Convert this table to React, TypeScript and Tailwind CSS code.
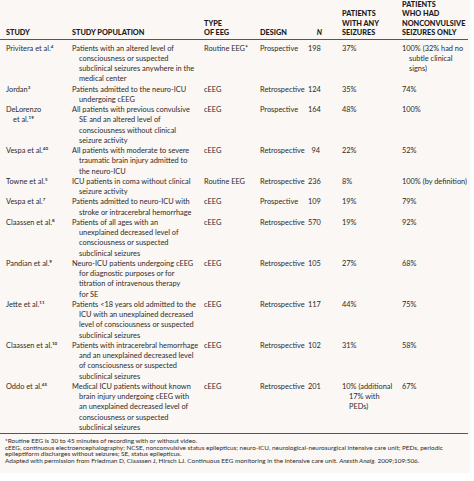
import React from "react";

type Row = {
  study: string[];
  sup: string;
  pop: string[];
  type: string;
  design: string;
  n: number;
  any: string[];
  ncs: string[];
};

const ROWS: Row[] = [
  {
    study: ["Privitera et al."],
    sup: "4",
    pop: [
      "Patients with an altered level of",
      "consciousness or suspected",
      "subclinical seizures anywhere in the",
      "medical center",
    ],
    type: "Routine EEG*",
    design: "Prospective",
    n: 198,
    any: ["37%"],
    ncs: ["100% (32% had no", "subtle clinical", "signs)"],
  },
  {
    study: ["Jordan"],
    sup: "3",
    pop: ["Patients admitted to the neuro-ICU", "undergoing cEEG"],
    type: "cEEG",
    design: "Retrospective",
    n: 124,
    any: ["35%"],
    ncs: ["74%"],
  },
  {
    study: ["DeLorenzo", "et al."],
    sup: "19",
    pop: [
      "All patients with previous convulsive",
      "SE and an altered level of",
      "consciousness without clinical",
      "seizure activity",
    ],
    type: "cEEG",
    design: "Prospective",
    n: 164,
    any: ["48%"],
    ncs: ["100%"],
  },
  {
    study: ["Vespa et al."],
    sup: "40",
    pop: [
      "All patients with moderate to severe",
      "traumatic brain injury admitted to",
      "the neuro-ICU",
    ],
    type: "cEEG",
    design: "Retrospective",
    n: 94,
    any: ["22%"],
    ncs: ["52%"],
  },
  {
    study: ["Towne et al."],
    sup: "5",
    pop: ["ICU patients in coma without clinical", "seizure activity"],
    type: "Routine EEG",
    design: "Retrospective",
    n: 236,
    any: ["8%"],
    ncs: ["100% (by definition)"],
  },
  {
    study: ["Vespa et al."],
    sup: "7",
    pop: ["Patients admitted to neuro-ICU with", "stroke or intracerebral hemorrhage"],
    type: "cEEG",
    design: "Prospective",
    n: 109,
    any: ["19%"],
    ncs: ["79%"],
  },
  {
    study: ["Claassen et al."],
    sup: "8",
    pop: [
      "Patients of all ages with an",
      "unexplained decreased level of",
      "consciousness or suspected",
      "subclinical seizures",
    ],
    type: "cEEG",
    design: "Retrospective",
    n: 570,
    any: ["19%"],
    ncs: ["92%"],
  },
  {
    study: ["Pandian et al."],
    sup: "9",
    pop: [
      "Neuro-ICU patients undergoing cEEG",
      "for diagnostic purposes or for",
      "titration of intravenous therapy",
      "for SE",
    ],
    type: "cEEG",
    design: "Retrospective",
    n: 105,
    any: ["27%"],
    ncs: ["68%"],
  },
  {
    study: ["Jette et al."],
    sup: "11",
    pop: [
      "Patients <18 years old admitted to the",
      "ICU with an unexplained decreased",
      "level of consciousness or suspected",
      "subclinical seizures",
    ],
    type: "cEEG",
    design: "Retrospective",
    n: 117,
    any: ["44%"],
    ncs: ["75%"],
  },
  {
    study: ["Claassen et al."],
    sup: "10",
    pop: [
      "Patients with intracerebral hemorrhage",
      "and an unexplained decreased level",
      "of consciousness or suspected",
      "subclinical seizures",
    ],
    type: "cEEG",
    design: "Retrospective",
    n: 102,
    any: ["31%"],
    ncs: ["58%"],
  },
  {
    study: ["Oddo et al."],
    sup: "45",
    pop: [
      "Medical ICU patients without known",
      "brain injury undergoing cEEG with",
      "an unexplained decreased level of",
      "consciousness or suspected",
      "subclinical seizures",
    ],
    type: "cEEG",
    design: "Retrospective",
    n: 201,
    any: ["10% (additional", "17% with", "PEDs)"],
    ncs: ["67%"],
  },
];

// hanging indent: first line flush, rest pushed in
function Lines({ lines, last }: { lines: string[]; last?: React.ReactNode }) {
  return (
    <>
      {lines.map((l, i) => (
        <div key={i} className={i === 0 ? "" : "pl-[7px]"}>
          {l}
          {i === lines.length - 1 && last}
        </div>
      ))}
    </>
  );
}

export default function App() {
  return (
    <div className="min-h-[481px] w-[474px] bg-white">
      <div
        className="h-[473px] w-[470px] bg-[#faf7f4] text-[#2c2c2c]"
        style={{ fontFamily: "Lato, 'Open Sans', sans-serif" }}
      >
        <table className="w-[468px] table-fixed border-collapse whitespace-nowrap text-[7.4px] leading-[10.25px]">
          <colgroup>
            <col className="w-[72px]" />
            <col className="w-[132px]" />
            <col className="w-[56px]" />
            <col className="w-[48px]" />
            <col className="w-[34px]" />
            <col className="w-[60px]" />
            <col className="w-[66px]" />
          </colgroup>
          <thead>
            <tr className="border-b border-[#555] align-bottom text-[7.3px] leading-[9.4px] uppercase text-[#1c1c1c]">
              <th className="pb-[1.5px] pl-[6px] text-left font-black">Study</th>
              <th className="pb-[1.5px] text-left font-black">Study Population</th>
              <th className="pb-[1.5px] text-left font-black">
                Type
                <br />
                of EEG
              </th>
              <th className="pb-[1.5px] text-left font-black">Design</th>
              <th className="pb-[1.5px] pr-[20px] text-right font-black normal-case italic">N</th>
              <th className="pb-[1.5px] text-left font-black">
                Patients
                <br />
                with any
                <br />
                seizures
              </th>
              <th className="pb-[1.5px] text-left font-black">
                Patients
                <br />
                who had
                <br />
                nonconvulsive
                <br />
                seizures only
              </th>
            </tr>
          </thead>
          <tbody className="align-top">
            {ROWS.map((r, idx) => {
              const first = idx === 0 ? "pt-[3.5px]" : "";
              const lastRow = idx === ROWS.length - 1;
              return (
                <tr key={idx} className={lastRow ? "border-b border-[#555]" : ""}>
                  <td className={`pl-[6px] ${first} ${lastRow ? "pb-[7px]" : ""}`}>
                    <Lines
                      lines={r.study}
                      last={
                        <span className="relative -top-[3px] text-[4.5px] font-bold leading-none">
                          {r.sup}
                        </span>
                      }
                    />
                  </td>
                  <td className={first}>
                    <Lines lines={r.pop} />
                  </td>
                  <td className={first}>{r.type}</td>
                  <td className={first}>{r.design}</td>
                  <td className={`pr-[22px] text-right ${first}`}>{r.n}</td>
                  <td className={first}>
                    <Lines lines={r.any} />
                  </td>
                  <td className={first}>
                    <Lines lines={r.ncs} />
                  </td>
                </tr>
              );
            })}
          </tbody>
        </table>
        <div className="pl-[5px] pt-[4px] whitespace-nowrap text-[6.4px] leading-[6.6px] text-[#2c2c2c]">
          <div>*Routine EEG is 30 to 45 minutes of recording with or without video.</div>
          <div>
            cEEG, continuous electroencephalography; NCSE, nonconvulsive status epilepticus;
            neuro-ICU, neurological-neurosurgical intensive care unit; PEDs, periodic
          </div>
          <div>epileptiform discharges without seizures; SE, status epilepticus.</div>
          <div>
            Adapted with permission from Friedman D, Claassen J, Hirsch LJ. Continuous EEG
            monitoring in the intensive care unit. <i>Anesth Analg.</i> 2009;109:506.
          </div>
        </div>
      </div>
    </div>
  );
}
